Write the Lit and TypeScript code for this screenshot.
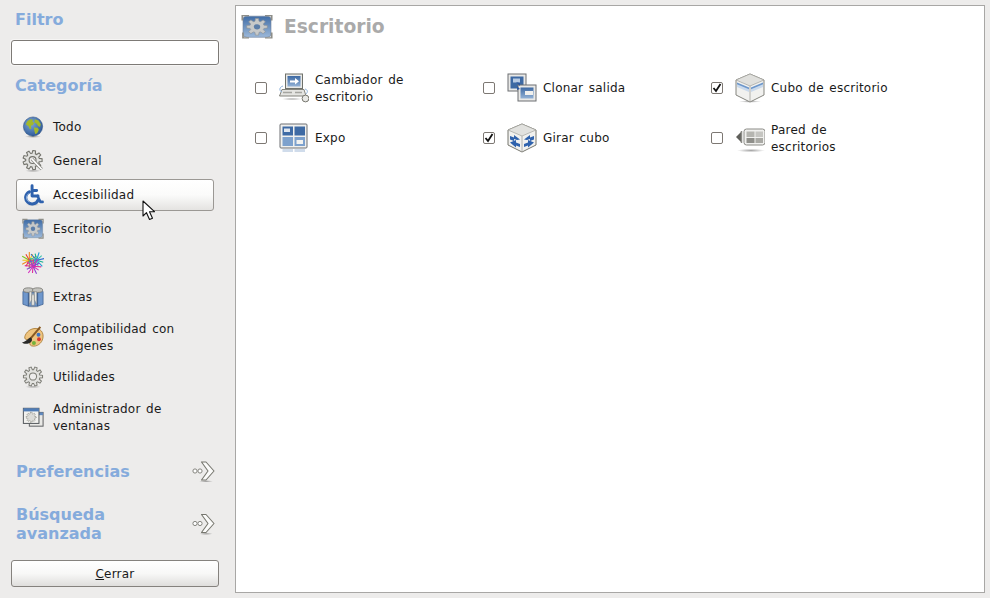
import { LitElement, html, css, svg, nothing } from "lit";
import { customElement } from "lit/decorators.js";

function gear(cx: number, cy: number, ro: number, ri: number, n: number): string {
  const pts: string[] = [];
  for (let i = 0; i < n; i++) {
    const a = (i / n) * Math.PI * 2;
    const w = (Math.PI * 2) / n;
    const p = (r: number, t: number) => `${(cx + r * Math.cos(t)).toFixed(2)} ${(cy + r * Math.sin(t)).toFixed(2)}`;
    pts.push(p(ri, a - w * 0.36), p(ro, a - w * 0.2), p(ro, a + w * 0.2), p(ri, a + w * 0.36));
  }
  return "M" + pts.join("L") + "Z";
}

const defs = svg`
  <defs>
    <radialGradient id="globe" cx=".4" cy=".35" r=".75"><stop offset="0" stop-color="#7fa8d8"/><stop offset="1" stop-color="#24508f"/></radialGradient>
    <linearGradient id="desk" x1="0" y1="0" x2="0" y2="1"><stop offset="0" stop-color="#3f6ca6"/><stop offset="1" stop-color="#9db9d9"/></linearGradient>
    <linearGradient id="tile" x1="0" y1="0" x2="0" y2="1"><stop offset="0" stop-color="#3d69a3"/><stop offset="1" stop-color="#93b2d6"/></linearGradient>
    <radialGradient id="shadow"><stop offset="0" stop-color="#000" stop-opacity=".35"/><stop offset="1" stop-color="#000" stop-opacity="0"/></radialGradient>
  </defs>`;

const burstOrigins = [[8, 9], [16, 9], [12, 15.500]];
const burst = burstOrigins.flatMap(([ox, oy], k) =>
  Array.from({ length: 12 }, (_, i) => {
    const a = (i / 12) * Math.PI * 2 + k * 0.3;
    const c = k === 2 ? ["#d52fc0", "#8e3fd0", "#e0309a"][i % 3] : k === 0 ? ["#e8402a", "#f08a1e", "#f4c51f", "#7fc31c"][i % 4] : ["#18b08f", "#1e9fd8", "#3cc4b0", "#2f6ad0"][i % 4];
    const len = 7.500 + (i % 2) * 1.500;
    return svg`<line x1=${ox} y1=${oy} x2=${ox + len * Math.cos(a)} y2=${oy + len * Math.sin(a)} stroke=${c} stroke-width="1.200"/>`;
  })
);

const bracketCorners = svg`<path d="M1 6V1.500h5M18 1.500h5V6M23 17v5h-5M6 22H1.500V17" fill="none" stroke="#8d8d88" stroke-width="1.300"/>`;

const icons: Record<string, unknown> = {
  globe: svg`<ellipse cx="12" cy="22.500" rx="9" ry="1.500" fill="url(#shadow)"/>
    <circle cx="12" cy="11.500" r="10.500" fill="url(#globe)" stroke="#2b4f80" stroke-width=".6"/>
    <path d="M6 5.500l3-2 3 .6-.6 2 1.800 1.500-1.500 2.600-2 .4.400 3-1.400 1-1.600-3.500-3-2zM14 3.500l4 1.500 2.500 4-.8 3-2.200-1-1.500-2.500-2.600-1.500zM13 12.500l4 .4 1.400 2-1.900 4-2.100.6-.9-3.500z" fill="#a3b82a"/>`,
  general: svg`<ellipse cx="12" cy="22.800" rx="9" ry="1.200" fill="url(#shadow)"/>
    <path d=${gear(11.500, 11, 10.500, 7.500, 9)} fill="#e2e2df" stroke="#73736c" stroke-width="1.200"/>
    <circle cx="11.500" cy="11" r="3.800" fill="#edeceb" stroke="#73736c" stroke-width="1.200"/>
    <path d="M11 10l10.500 11" stroke="#85857e" stroke-width="3.400"/>
    <path d="M11 10l10.500 11" stroke="#fff" stroke-width="1.800"/>`,
  access: svg`<ellipse cx="12" cy="22.800" rx="9" ry="1" fill="url(#shadow)"/>
    <path d="M11 2v11h6.500M11 7h5" fill="none" stroke="#2f62ad" stroke-width="3.200" stroke-linecap="round" stroke-linejoin="round"/>
    <path d="M17 13l3 6.500h2.500" fill="none" stroke="#2f62ad" stroke-width="2.800" stroke-linecap="round" stroke-linejoin="round"/>
    <path d="M8 8.500a7 7 0 1 0 9.500 9" fill="none" stroke="#2f62ad" stroke-width="3.400" stroke-linecap="round"/>
    <path d="M7.400 10.500a5 5 0 0 0 .6 9" fill="none" stroke="#9dbbe0" stroke-width="1"/>`,
  desktop: svg`<rect x="1.500" y="2" width="21" height="19.500" rx="3" fill="url(#desk)" stroke="#6e8199" stroke-width=".5"/>
    ${bracketCorners}
    <path d=${gear(12, 11.800, 7.800, 5.400, 8)} fill="#c7c9c9" stroke="#8c8f92" stroke-width=".5"/>
    <circle cx="12" cy="11.800" r="2.400" fill="#5c7ea8"/>`,
  effects: svg`${burst}`,
  extras: svg`<ellipse cx="12" cy="22.800" rx="10" ry="1" fill="url(#shadow)"/>
    <path d="M1 6l6 1v15l-6-2zM23 6l-6 1v15l6-2zM7 7h10v15H7z" fill="#6f97cc" stroke="#3d5f8e" stroke-width=".8"/>
    <ellipse cx="7" cy="4.500" rx="5.500" ry="2.500" fill="#c4c4bf" stroke="#6d6d68" stroke-width=".8"/>
    <ellipse cx="17" cy="4.500" rx="5.500" ry="2.500" fill="#c4c4bf" stroke="#6d6d68" stroke-width=".8"/>
    <path d="M8 6v14l2.500-5V6.500zM16 6v14l-2.500-5V6.500zM12 8l-1.500 3v10h3V11z" fill="#e6e6e2" stroke="#7a7a75" stroke-width=".5"/>`,
  palette: svg`<path d="M12 3c6-1.500 11 2 11 8 0 6-4.500 11-10.500 11-3.500 0-4.500-2-4-4.500.5-2.500-2.500-2-4.500-3C1 13 5 4.500 12 3z" fill="#efc47f" stroke="#a87a30" stroke-width=".9"/>
    <circle cx="18" cy="9.500" r="2.100" fill="#3c73c4"/><circle cx="18.500" cy="14.500" r="2.100" fill="#d8392f"/><circle cx="13" cy="18.500" r="2.200" fill="#74b23a"/>
    <path d="M20 1L9 14" stroke="#8a5a22" stroke-width="2.200"/>
    <path d="M9.500 12.500c-3 .5-4 4-9.500 5.500 2 2 8 2 10.500-1.500.8-1.200.5-3-1-4z" fill="#2a2a28"/>`,
  util: svg`<ellipse cx="12" cy="22.800" rx="9" ry="1.200" fill="url(#shadow)"/>
    <path d=${gear(12, 11.500, 10.500, 7.500, 10)} fill="#e2e2df" stroke="#7d7d76" stroke-width="1.100"/>
    <circle cx="12" cy="11.500" r="3.900" fill="#edeceb" stroke="#7d7d76" stroke-width="1.100"/>`,
  windows: svg`<rect x="8" y="7" width="15" height="15" fill="#e9e9e6" stroke="#5f6164" stroke-width="1.100"/>
    <rect x="8" y="7" width="15" height="3" fill="#5f88bd"/>
    <rect x="1.500" y="2.500" width="17" height="16.500" fill="#f2f2ef" stroke="#55595d" stroke-width="1.100"/>
    <rect x="1.500" y="2.500" width="17" height="3.400" fill="#4f7cb6"/>
    <path d=${gear(10, 12.300, 5.500, 4, 8)} fill="#dcdcd8" stroke="#77776f" stroke-width=".8" stroke-dasharray="1.200 .8"/>`,
  arrow: svg`<ellipse cx="15" cy="22.300" rx="7" ry="1.200" fill="url(#shadow)"/>
    <circle cx="4" cy="12" r="2.100" fill="#fff" stroke="#85857f" stroke-width="1"/>
    <circle cx="9" cy="12" r="2.100" fill="#fff" stroke="#85857f" stroke-width="1"/>
    <path d="M10.500 3h4.500l8 9-8 9h-4.500l6.500-9z" fill="#fbfbfa" stroke="#77776f" stroke-width="1.100" stroke-linejoin="round"/>`,
  switcher: svg`<ellipse cx="13" cy="26" rx="11" ry="1.200" fill="url(#shadow)"/>
    <rect x="6.500" y="1" width="17" height="14.500" fill="#e8e8e6" stroke="#6e716b"/>
    <rect x="8.500" y="3" width="13" height="10.500" fill="url(#tile)"/>
    <path d="M11 7.500h5V5l4 3.200-4 3.200V9.500h-5z" fill="#fff"/>
    <path d="M3 16.500h22l2 6.500H.5z" fill="#e5e5e2" stroke="#77776f" stroke-width=".9"/>
    <path d="M16 19.500h7M4 19.500h9" stroke="#a5a5a0" stroke-width="1.400"/>
    <path d="M4 13C0 14 0 18 3 19M26 16c3 1 3 3 1 5" fill="none" stroke="#8fb2dc" stroke-width="1"/>
    <circle cx="26.500" cy="25.500" r="3.400" fill="#e8e8e5" stroke="#77776f"/>`,
  expo: svg`<rect x="1" y="1" width="27" height="24" rx="1" fill="#f0f0ee" stroke="#6c6f72"/>
    <rect x="3.500" y="3.500" width="10.500" height="9" fill="#3e6aa4"/><rect x="15.500" y="3.500" width="10.500" height="9" fill="#3e6aa4"/>
    <rect x="3.500" y="14" width="10.500" height="9" fill="#7da1cd"/><rect x="15.500" y="14" width="10.500" height="9" fill="#7da1cd"/>
    <rect x="5" y="5.500" width="6" height="3.500" fill="#dfe6ef"/><rect x="17.500" y="17" width="6.500" height="4" fill="#f2f2f0"/>
    <rect x="3.500" y="26" width="10.500" height="3" fill="#bccde2" opacity=".7"/><rect x="15.500" y="26" width="10.500" height="3" fill="#bccde2" opacity=".7"/>`,
  clone: svg`<rect x="1" y="1" width="18" height="17" fill="#e9e9e7" stroke="#6c6f72"/>
    <rect x="3.500" y="3.500" width="13" height="12" fill="#3d69a3"/>
    <rect x="6" y="5.500" width="7" height="4" fill="#b8cbe3"/>
    <rect x="11" y="12" width="18" height="16" fill="#e9e9e7" stroke="#6c6f72"/>
    <rect x="13.500" y="14.500" width="13" height="11" fill="url(#tile)"/>
    <rect x="18" y="18" width="8" height="4" fill="#f0f0ee"/>
    <path d="M9 9l4 4v-3zM13 16l-3-3v4z" fill="#2c58a0"/>`,
  cube: svg`<ellipse cx="15" cy="28.500" rx="11" ry="1.300" fill="url(#shadow)"/>
    <path d="M15 1L29 7v15l-14 7L1 22V7z" fill="#f1f1ef" stroke="#85857f"/>
    <path d="M15 1L29 7l-14 6L1 7z" fill="#e0e0dd" stroke="#a3a39e" stroke-width=".7"/>
    <path d="M15 13v16" stroke="#a3a39e" stroke-width=".8"/>
    <path d="M2 10l12 5v4L2 14zM28 10l-12 5v4l12-5z" fill="#c9d9ec"/>
    <path d="M2 9.500l12 5v1.800l-12-5zM28 9.500l-12 5v1.800l12-5z" fill="#6d97cb"/>`,
  rotate: svg`<path d="M15 1L29 7v15l-14 7L1 22V7z" fill="#f1f1ef" stroke="#77776f"/>
    <path d="M15 1L29 7l-14 6L1 7z" fill="#e2e2df" stroke="#a3a39e" stroke-width=".7"/>
    <path d="M15 13v16" stroke="#a3a39e" stroke-width=".8"/>
    <path d="M3 13l4 1.500v-2.500l6 4.500-3 .5-3-1v2l-4-1.500zM13 21l-4-1.500V17l-6 2.500 6 5v-2l4 1.500zM27 13l-4 1.500v-2.500l-6 4.500 3 .5 3-1v2l4-1.500zM17 21l4-1.500V17l6 2.500-6 5v-2l-4 1.500z" fill="#2f62ad"/>`,
  wall: svg`<ellipse cx="16" cy="27.500" rx="14" ry="1.800" fill="url(#shadow)"/>
    <path d="M1 14l5-5v10z" fill="#5f5f5b"/><path d="M6.500 8v12" stroke="#8c8c87" stroke-width="1.500"/>
    <rect x="9" y="6" width="21" height="16" rx="2.500" fill="#f0f0ee" stroke="#8b8b86"/>
    <rect x="11.500" y="8.500" width="8" height="5.500" fill="#b5b5b0"/><rect x="20.500" y="8.500" width="7.500" height="5.500" fill="#c5c5c1"/>
    <rect x="11.500" y="15" width="8" height="5" fill="#8f8f8a"/><rect x="20.500" y="15" width="7.500" height="5" fill="#a9a9a4"/>`,
};

function icon(name: string, box: number, cls: string, stretch = false) {
  return html`<svg class=${cls} viewBox="0 0 ${box} ${box}" preserveAspectRatio=${stretch ? "none" : "xMidYMid meet"} aria-hidden="true">${defs}${icons[name]}</svg>`;
}

const categories = [
  { label: "Todo", icon: "globe" },
  { label: "General", icon: "general" },
  { label: "Accesibilidad", icon: "access", active: true },
  { label: "Escritorio", icon: "desktop" },
  { label: "Efectos", icon: "effects" },
  { label: "Extras", icon: "extras" },
  { label: "Compatibilidad con imágenes", icon: "palette", wrap: true },
  { label: "Utilidades", icon: "util" },
  { label: "Administrador de ventanas", icon: "windows", wrap: true },
];

const plugins = [
  { label: "Cambiador de escritorio", icon: "switcher", checked: false, wrap: true },
  { label: "Clonar salida", icon: "clone", checked: false },
  { label: "Cubo de escritorio", icon: "cube", checked: true },
  { label: "Expo", icon: "expo", checked: false },
  { label: "Girar cubo", icon: "rotate", checked: true },
  { label: "Pared de escritorios", icon: "wall", checked: false, wrap: true },
];

@customElement("app-root")
export class AppRoot extends LitElement {
  static styles = css`
    :host {
      display: grid;
      grid-template-columns: 235px 750px;
      width: 990px;
      height: 598px;
      overflow: hidden;
      background: #edeceb;
      font-family: "DejaVu Sans", sans-serif;
      font-size: 12px;
      letter-spacing: 0.22px;
      word-spacing: 1.5px;
      color: #1a1a1a;
    }
    .side {
      display: flex;
      flex-direction: column;
      height: 598px;
      box-sizing: border-box;
      padding: 0 16px 11px 11px;
    }
    .heading {
      font-size: 16px;
      font-weight: bold;
      color: #85abdc;
      line-height: 19px;
      letter-spacing: 0;
      word-spacing: 0;
    }
    .filter-title { margin: 10px 0 11px 4px; }
    .input {
      height: 25px;
      box-sizing: border-box;
      width: 208px;
      background: #fff;
      border: 1px solid #7d7a76;
      border-radius: 3px;
      box-shadow: 0 0 0 1px #f6f5f4;
    }
    .cat-title { margin: 11px 0 16px 4px; }
    .cats {
      display: flex;
      flex-direction: column;
      gap: 2px;
      margin: 0 0 0 5px;
      width: 198px;
    }
    .cat {
      position: relative;
      display: flex;
      align-items: center;
      gap: 9px;
      min-height: 32px;
      box-sizing: border-box;
      padding: 4px 5px;
      line-height: 17px;
      border: 1px solid transparent;
      border-radius: 3px;
    }
    .cat.wrap { padding: 5px 5px 3px; }
    .cat.active {
      border-color: #9b9894;
      background: linear-gradient(#ffffff 0%, #fbfbfa 50%, #e4e3e1 100%);
    }
    .cat-icon { width: 22px; height: 22px; flex: none; }
    .cat.wrap .cat-icon { margin-top: -2px; }
    .cursor {
      position: absolute;
      left: 125px;
      top: 20px;
      width: 14px;
      height: 21px;
    }
    .expander {
      display: flex;
      align-items: center;
      justify-content: space-between;
      margin-left: 5px;
      width: 198px;
    }
    .pref { margin-top: 20px; }
    .search { margin-top: 22px; }
    .arrow { width: 24px; height: 24px; flex: none; margin-right: -1px; }
    .search .arrow { transform: translateY(-0.5px); }
    .button {
      margin-top: auto;
      width: 208px;
      height: 27px;
      box-sizing: border-box;
      border: 1px solid #85827e;
      border-radius: 3px;
      background: linear-gradient(#ffffff 0%, #f8f8f7 50%, #dfdedc 100%);
      display: flex;
      align-items: center;
      justify-content: center;
    }
    .main {
      margin: 5px 0;
      height: 588px;
      box-sizing: border-box;
      background: #fff;
      border: 1px solid #a8a7a5;
      padding: 6px 6px;
    }
    .title {
      display: flex;
      align-items: center;
      gap: 11px;
      height: 29px;
      font-size: 18.670px;
      font-weight: bold;
      color: #aaaaaa;
      letter-spacing: 0;
      word-spacing: 0;
    }
    .title-icon { width: 32px; height: 26px; flex: none; margin: 1px 0 0 -1px; }
    .grid {
      display: grid;
      grid-template-columns: repeat(3, 228px);
      grid-auto-rows: 50px;
      margin: 22px 0 0 13px;
    }
    .plugin {
      display: flex;
      align-items: center;
    }
    .box {
      width: 12px;
      height: 12px;
      flex: none;
      box-sizing: border-box;
      border: 1px solid #7d7873;
      border-radius: 2px;
      background: #fff;
      display: flex;
      margin-right: 12px;
    }
    .box svg { width: 10px; height: 10px; }
    .plugin-icon { width: 30px; height: 30px; flex: none; margin-right: 6px; }
    .plugin-label { width: 122px; line-height: 17px; }
    .plugin-label.wrap { margin-top: 2px; }
  `;

  render() {
    return html`
      <aside class="side">
        <div class="heading filter-title">Filtro</div>
        <div class="input"></div>
        <div class="heading cat-title">Categoría</div>
        <div class="cats">
          ${categories.map(
            (c) => html`<div class="cat ${c.active ? "active" : ""} ${c.wrap ? "wrap" : ""}">
              ${icon(c.icon, 24, "cat-icon")}
              <span>${c.label}</span>
              ${c.active
                ? html`<svg class="cursor" viewBox="0 0 14 21">
                    <path d="M1 1v15l3.500-3.300 3 6.800 3-1.300-3-6.500h5z" fill="#fff" stroke="#111" stroke-width="1.100" stroke-linejoin="round"/>
                  </svg>`
                : nothing}
            </div>`
          )}
        </div>
        <div class="expander pref">
          <span class="heading">Preferencias</span>${icon("arrow", 24, "arrow")}
        </div>
        <div class="expander search">
          <span class="heading">Búsqueda<br />avanzada</span>${icon("arrow", 24, "arrow")}
        </div>
        <div class="button"><span><u>C</u>errar</span></div>
      </aside>
      <main class="main">
        <div class="title">${icon("desktop", 24, "title-icon", true)}<span>Escritorio</span></div>
        <div class="grid">
          ${plugins.map(
            (p) => html`<div class="plugin">
              <span class="box">
                ${p.checked
                  ? html`<svg viewBox="0 0 10 10"><path d="M1.500 5l2.500 3 4.500-7" fill="none" stroke="#111" stroke-width="1.800"/></svg>`
                  : nothing}
              </span>
              ${icon(p.icon, 30, "plugin-icon")}
              <span class="plugin-label ${p.wrap ? "wrap" : ""}">${p.label}</span>
            </div>`
          )}
        </div>
      </main>
    `;
  }
}
